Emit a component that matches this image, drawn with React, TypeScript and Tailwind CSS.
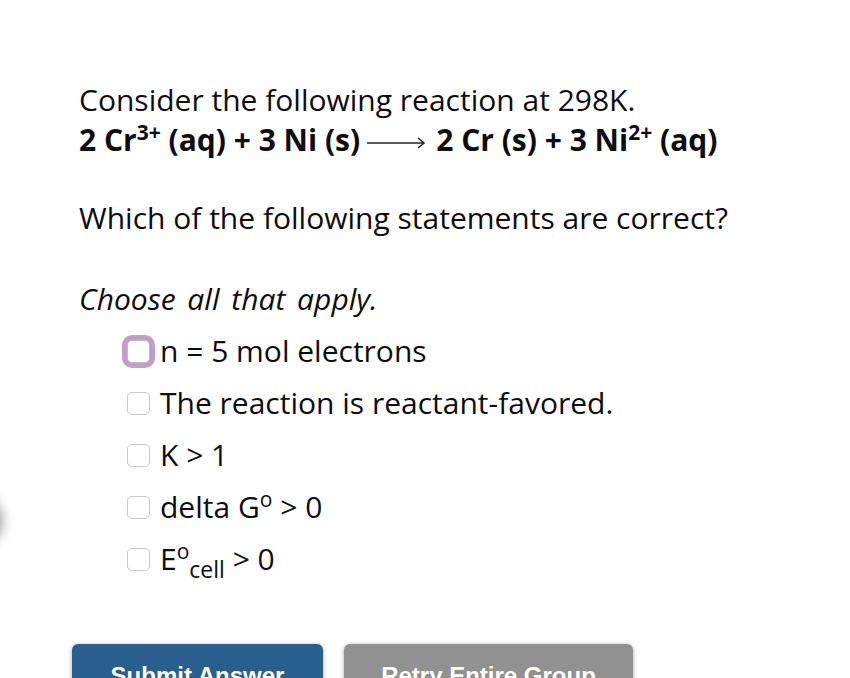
import React from "react";

const options = [
  { id: "n", label: <>n = 5 mol electrons</>, focused: true },
  { id: "rf", label: <>The reaction is reactant-favored.</> },
  { id: "k", label: <>K &gt; 1</> },
  {
    id: "g",
    label: (
      <>
        delta G<sup className="text-[21px] relative -top-[11px]">o</sup> &gt; 0
      </>
    ),
  },
  {
    id: "e",
    label: (
      <>
        E<sup className="text-[21px] relative -top-[11px]">o</sup>
        <sub className="text-[23px] relative top-[8px]">cell</sub> &gt; 0
      </>
    ),
  },
];

function Arrow() {
  return (
    <svg width="62" height="16" viewBox="0 0 62 16" className="ml-[6px] mr-[8px] mt-[6px]">
      <line x1="1" y1="8" x2="58" y2="8" stroke="#222" strokeWidth="1.6" />
      <path d="M52 3 L58 8 L52 13" fill="none" stroke="#222" strokeWidth="1.6" />
    </svg>
  );
}

export default function App() {
  return (
    <div
      className="relative w-[850px] h-[678px] overflow-hidden bg-white text-[#0d0d0d] text-[30px]"
      style={{ fontFamily: '"Open Sans", "Noto Sans", sans-serif' }}
    >
      <div className="absolute left-[-44px] top-[498px] w-[44px] h-[46px] rounded-full bg-white shadow-[0_0_14px_rgba(0,0,0,0.55)]" />

      <div className="pl-[79px] pt-[80px]">
        <p className="leading-[40px]">Consider the following reaction at 298K.</p>
        <p className="leading-[40px] font-bold flex items-center">
          <span>
            2 Cr<sup className="text-[21px] relative -top-[11px]">3+</sup> (aq) + 3 Ni (s)
          </span>
          <Arrow />
          <span>
            2 Cr (s) + 3 Ni<sup className="text-[21px] relative -top-[11px]">2+</sup> (aq)
          </span>
        </p>

        <p className="leading-[40px] mt-[38px]">Which of the following statements are correct?</p>

        <p className="leading-[40px] mt-[41px] italic [word-spacing:4px]">Choose all that apply.</p>

        <div className="mt-[6px] flex flex-col">
          {options.map((o) => (
            <label key={o.id} className="h-[52px] flex items-center">
              <span
                className={
                  o.focused
                    ? "ml-[48px] w-[23px] h-[23px] shrink-0 rounded-[5px] border border-[#bdbdbd] bg-white ring-[5px] ring-[#c49bc9]"
                    : "ml-[48px] w-[23px] h-[23px] shrink-0 rounded-[5px] border border-[#c8c8c8] bg-white"
                }
              />
              <span className="ml-[10px] leading-[40px]">{o.label}</span>
            </label>
          ))}
        </div>
      </div>

      <div className="flex gap-[21px] pl-[72px] mt-[59px]">
        <button
          className="w-[251px] h-[60px] rounded-[6px] bg-[#285f8f] text-white font-bold text-[24px] shadow-[0_1px_5px_rgba(0,0,0,0.35)] pt-[4px]"
          style={{ fontFamily: '"Liberation Sans", Arial, sans-serif' }}
        >
          Submit Answer
        </button>
        <button
          className="w-[289px] h-[60px] rounded-[6px] bg-[#919191] text-white font-bold text-[24px] shadow-[0_1px_5px_rgba(0,0,0,0.35)] pt-[4px]"
          style={{ fontFamily: '"Liberation Sans", Arial, sans-serif' }}
        >
          Retry Entire Group
        </button>
      </div>
    </div>
  );
}
